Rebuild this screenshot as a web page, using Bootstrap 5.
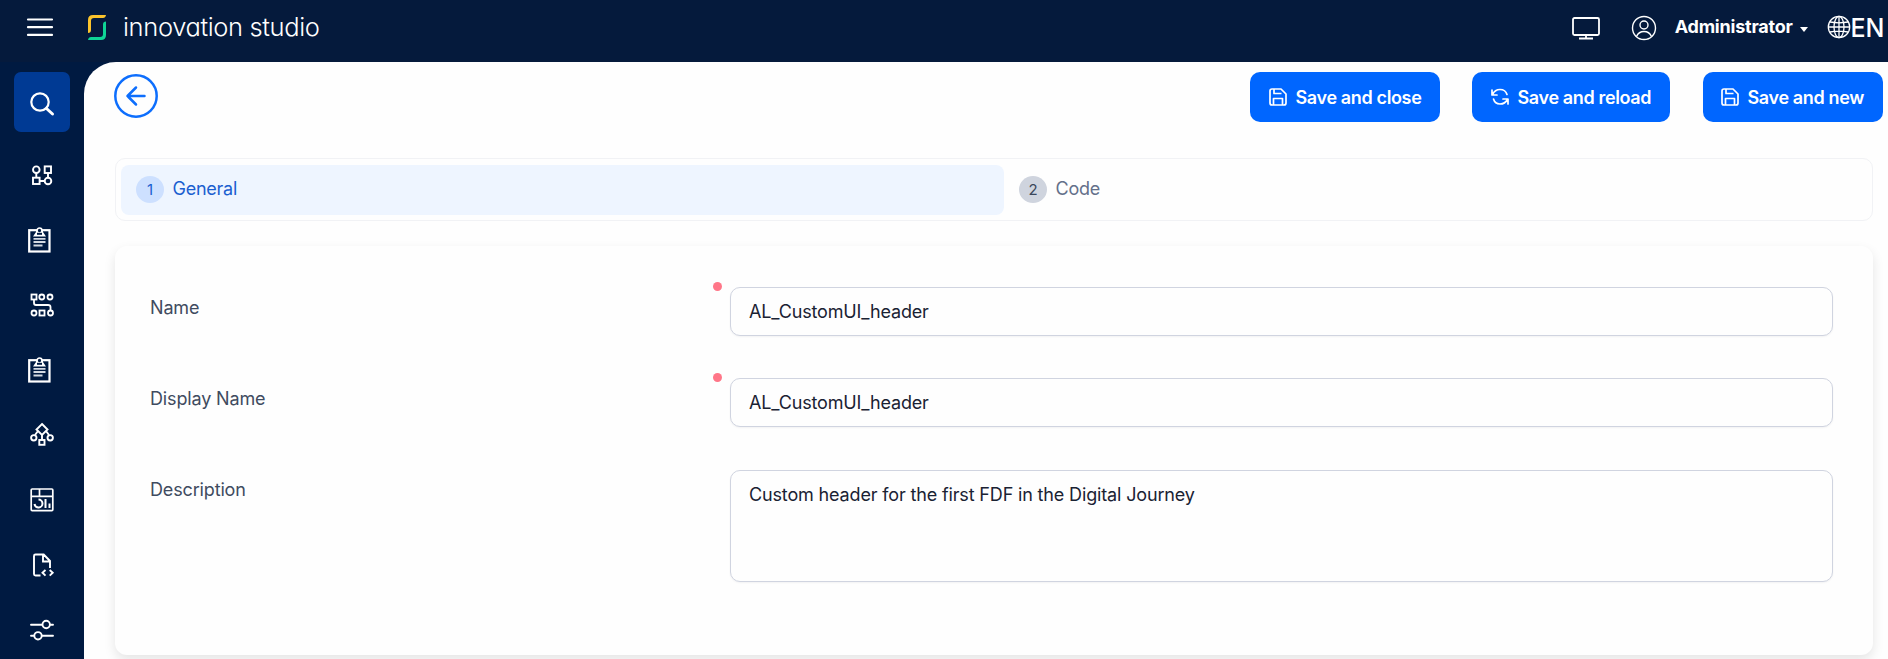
<!DOCTYPE html>
<html lang="en">
<head>
<meta charset="utf-8">
<title>innovation studio</title>
<link href="https://cdn.jsdelivr.net/npm/bootstrap@5.3.0/dist/css/bootstrap.min.css" rel="stylesheet">
<style>
body{font-family:Inter,"Liberation Sans",sans-serif;font-size:18px;line-height:24px;letter-spacing:-.15px;background:#001a41;color:#1a2233;height:659px;overflow:hidden}
svg{display:block;fill:none;stroke:currentColor;flex:none}
.top-bar{height:62px;background:#051a3c;color:#fff}
.top-bar .logo{stroke:none}
.menu-toggle{width:84px;height:62px;background:#001a41;color:#fff;padding:0 0 0 25px}
.menu-toggle svg{margin-top:-8px}
.brand-name{font-weight:300;font-size:25.5px;line-height:30px;font-feature-settings:"cv11";color:#fff;letter-spacing:-.36px;margin-left:17px}
.user-tools{padding-right:4px}
.screen-icon{margin:-6px 30px 0 0}
.user-icon{margin-top:-6px}
.globe-icon{margin:-8px 0 0 19px}
.user-name{font-weight:700;letter-spacing:-.22px;margin-left:17.5px;margin-top:-9px}
.user-name::after{margin-left:7px;border-width:5px 4.5px 0;border-style:solid;border-color:#fff transparent transparent;content:"";display:inline-block;vertical-align:1px}
.lang{font-size:25px;line-height:30px;font-weight:500;letter-spacing:-.3px;margin-top:-7px}
.side{width:84px;color:#fff}
.side-search{width:56px;height:60px;border-radius:7px;background:#003a94;margin:10px 0 10.5px 14px;padding:0}
.side-search svg{margin-top:3px}
.side-item{height:65px;width:84px;padding:0}
.workspace{background:#fefefe;border-top-left-radius:32px;height:597px;padding:10px 5px 0 30px;min-width:0}
.back{color:#0d6efd;padding:0;margin-top:2px}
.btn-save{height:50px;border-radius:10px;background:#06f;color:#fff;font-weight:600;font-size:18px;letter-spacing:-.36px;gap:8.500px;padding:0 0 0 19px}
.save-close{width:190px}
.save-reload{width:198px;margin:0 33px 0 32px}
.save-new{width:180px;padding-left:18px}
.stepper{margin:36px 10px 0 1px;height:63px;border:1px solid #f1f2f5;border-radius:10px;padding:6px 5px 5px}
.step{height:50px;border-radius:8px;padding-left:15px;gap:8.5px;color:#64708a;flex:0 0 883px}
.step.current{background:#eef5ff;color:#1b5fd0}
.step-text{margin-top:-2px;letter-spacing:-.25px}
.step-no{width:28px;height:27px;border-radius:50%;background:#cfd4de;color:#3b475b;font-size:15px;margin-top:-1px}
.current .step-no{background:#cde0ff;color:#1b5fd0}
.panel{margin:25px 10px 0 1px;height:409px;border-radius:12px;box-shadow:0 5px 12px rgba(0,0,0,.10);background:#fefefe;padding:41px 40px 0 35px}
.field-label{width:580px;color:#404b5f;padding-top:9px;flex:none}
.form-control{border:1px solid #d0d4e0;border-radius:10px;height:49px;font-size:18px;line-height:24px;letter-spacing:-.15px;padding:11px 18px;color:#1a2233;background:#fefefe;box-shadow:0 1px 2px rgba(16,24,40,.05)}
textarea.form-control{height:112px;resize:none;padding-top:12px}
.req{position:absolute;left:-17px;top:-5px;width:9px;height:9px;border-radius:50%;background:#ff7688}
</style>
</head>
<body>
<header class="top-bar d-flex">
  <button class="menu-toggle btn border-0 rounded-0 d-flex align-items-center" aria-label="Menu">
    <svg width="30" height="30" viewBox="0 0 30 30" stroke-width="2.2" stroke-linecap="round"><path d="M3 7.500h24M3 15.200h24M3 22.900h24"/></svg>
  </button>
  <a class="d-flex align-items-center text-decoration-none mb-0 ps-1 pb-2" href="#">
    <svg class="logo" width="18" height="25" viewBox="0 0 18 25"><path fill="#fcc42c" d="M0 18V5Q0 0 5 0h13q-.5 3-3 3H6Q3 3 3 6v9q0 3-3 3z"/><path fill="#0fd596" d="M18 6.500v13.500q0 5-5 5H0q.5-3 3-3h9q3 0 3-3V9.500q0-3 3-3z"/></svg>
    <span class="brand-name">innovation studio</span>
  </a>
  <div class="user-tools ms-auto d-flex align-items-center">
    <svg class="screen-icon" width="30" height="26" viewBox="0 0 30 26" stroke-width="1.8"><rect x="2" y="3" width="26" height="17" rx="1.500"/><path d="M15 20v3M8 23.500h14"/></svg>
    <svg class="user-icon" width="26" height="26" viewBox="0 0 26 26" stroke-width="1.400"><circle cx="13" cy="13" r="11.500"/><circle cx="13" cy="10" r="4"/><path d="M5.500 21.500q2.200-5 7.500-5t7.500 5"/></svg>
    <span class="user-name">Administrator</span>
    <svg class="globe-icon" width="24" height="24" viewBox="0 0 24 24" stroke-width="1.300"><circle cx="12" cy="12" r="10.700"/><ellipse cx="12" cy="12" rx="5" ry="10.700"/><path d="M12 1.300v21.400M1.300 12h21.400M3 7q9 1.600 18 0M3 17q9-1.600 18 0"/></svg>
    <span class="lang">EN</span>
  </div>
</header>
<div class="d-flex">
  <nav class="side d-flex flex-column flex-shrink-0">
    <button class="side-search btn border-0 text-white d-flex align-items-center justify-content-center" aria-label="Search"><svg width="26" height="26" viewBox="0 0 26 26" stroke-width="2.200" stroke-linecap="round"><circle cx="11" cy="11" r="8.700"/><path d="M17.500 17.500l6 5.500" stroke-width="3"/></svg></button>
    <a class="side-item text-white d-flex align-items-center justify-content-center" href="#"><svg width="30" height="30" viewBox="0 0 30 30" stroke-width="1.900"><circle cx="9.300" cy="9.700" r="3.300"/><rect x="17.700" y="6.400" width="6.300" height="6.600"/><rect x="6" y="17.700" width="6.600" height="6.300"/><circle cx="21" cy="21" r="3.300"/><path d="M9.300 13v4.500M21 13v4.500M12.600 21h5"/></svg></a>
    <a class="side-item text-white d-flex align-items-center justify-content-center" href="#"><svg width="30" height="30" viewBox="0 0 30 30" stroke-width="2.200"><rect x="2.200" y="5.200" width="20.300" height="21.300"/><path d="M6 11.500h13L16 7V5h-2Q12.500 1.300 11 5H9v2z" fill="#fff" stroke="none"/><circle cx="12.500" cy="5.500" r="2.500" fill="#001a41" stroke-width="1.700"/><path stroke="#001a41" stroke-width="2" d="M10 8.800h5"/><path stroke="#d4d9e2" stroke-width="1.800" d="M6.500 13.800h12M6.500 17h12M6.500 20.500h9"/></svg></a>
    <a class="side-item text-white d-flex align-items-center justify-content-center" href="#"><svg width="30" height="30" viewBox="0 0 30 30" stroke-width="1.800"><rect x="4.500" y="4.500" width="5" height="5"/><circle cx="14.800" cy="7" r="2.500"/><circle cx="23" cy="7" r="2.500"/><path d="M7 9.500V13q0 2 2 2h12q2.500 0 2.500 2v3"/><circle cx="7" cy="23" r="2.500"/><rect x="12.500" y="20.500" width="5" height="5"/><circle cx="23.500" cy="23" r="2.500"/></svg></a>
    <a class="side-item text-white d-flex align-items-center justify-content-center" href="#"><svg width="30" height="30" viewBox="0 0 30 30" stroke-width="2.200"><rect x="2.200" y="5.200" width="20.300" height="21.300"/><path d="M6 11.500h13L16 7V5h-2Q12.500 1.300 11 5H9v2z" fill="#fff" stroke="none"/><circle cx="12.500" cy="5.500" r="2.500" fill="#001a41" stroke-width="1.700"/><path stroke="#001a41" stroke-width="2" d="M10 8.800h5"/><path stroke="#d4d9e2" stroke-width="1.800" d="M6.500 13.800h12M6.500 17h12M6.500 20.500h9"/></svg></a>
    <a class="side-item text-white d-flex align-items-center justify-content-center" href="#"><svg width="30" height="30" viewBox="0 0 30 30" stroke-width="1.900"><path d="M15 4l5.500 5.500L15 15 9.500 9.500zM11 11l-3 4M19 11l3 4M15 15v5"/><circle cx="6.800" cy="17.800" r="2.700"/><circle cx="23.200" cy="17.800" r="2.700"/><rect x="12.300" y="20" width="5.200" height="4.800"/></svg></a>
    <a class="side-item text-white d-flex align-items-center justify-content-center" href="#"><svg width="30" height="30" viewBox="0 0 30 30" stroke-width="1.700"><rect x="4.200" y="4" width="21.600" height="21.600" rx="1"/><path d="M4 11.300h22M12.500 4v7"/><path stroke-width="2" d="M11.500 14.500A4 4 0 1 1 7.500 19M18.500 14v9M22.500 18.500V23"/></svg></a>
    <a class="side-item text-white d-flex align-items-center justify-content-center" href="#"><svg width="30" height="30" viewBox="0 0 30 30" stroke-width="1.900"><path d="M13.500 25.500h-5q-1.500 0-1.500-1.500V6q0-1.500 1.500-1.500h8.200L23 11v7M16 4.500v7h7M18.500 20l-3 2.800 3 2.800M22.700 20l3 2.800-3 2.800"/></svg></a>
    <a class="side-item text-white d-flex align-items-center justify-content-center" href="#"><svg width="30" height="30" viewBox="0 0 30 30" stroke-width="1.900" stroke-linecap="round"><path d="M4 9.700h11M23.500 9.700h2.500M4 20.800h3M15 20.800h11"/><circle cx="19.200" cy="9.500" r="3.700"/><circle cx="11" cy="20.800" r="3.700"/></svg></a>
  </nav>
  <main class="workspace flex-grow-1">
    <div class="d-flex align-items-start">
      <button class="back btn border-0" aria-label="Back"><svg width="44" height="44" viewBox="0 0 44 44" stroke-width="2.500" stroke-linecap="round" stroke-linejoin="round"><circle cx="22" cy="22" r="20.700"/><path d="M30.500 22H13.500M22 13.500L13.500 22l8.500 8.500"/></svg></button>
      <div class="ms-auto d-flex">
        <button class="btn btn-save save-close border-0 d-flex align-items-center"><svg width="18" height="18" viewBox="0 0 18 18" stroke-width="1.700" stroke-linejoin="round"><path d="M3 1h9l5 5v9q0 2-2 2H3q-2 0-2-2V3q0-2 2-2zM5 1v4.500h7.500M4.500 17v-6.500h9V17"/></svg>Save and close</button>
        <button class="btn btn-save save-reload border-0 d-flex align-items-center"><svg width="18" height="18" viewBox="0 0 18 18" stroke-width="1.700" stroke-linecap="round" stroke-linejoin="round"><path d="M1 2v5h5M1.500 6.500Q4 1.500 9 1.500q5.500 0 7 5M17 16v-5h-5M16.500 11.500Q14 16 9 16q-5 0-6.500-5"/></svg>Save and reload</button>
        <button class="btn btn-save save-new border-0 d-flex align-items-center"><svg width="18" height="18" viewBox="0 0 18 18" stroke-width="1.700" stroke-linejoin="round"><path d="M3 1h9l5 5v9q0 2-2 2H3q-2 0-2-2V3q0-2 2-2zM5 1v4.500h7.500M4.500 17v-6.500h9V17"/></svg>Save and new</button>
      </div>
    </div>
    <div class="stepper d-flex">
      <div class="step current d-flex align-items-center"><span class="step-no d-flex align-items-center justify-content-center">1</span><span class="step-text">General</span></div>
      <div class="step d-flex align-items-center flex-shrink-1"><span class="step-no d-flex align-items-center justify-content-center">2</span><span class="step-text">Code</span></div>
    </div>
    <form class="panel">
      <div class="d-flex" style="margin-bottom:42px"><label class="field-label" for="f1">Name</label><div class="position-relative flex-grow-1"><span class="req"></span><input id="f1" class="form-control" value="AL_CustomUI_header"></div></div>
      <div class="d-flex" style="margin-bottom:43px"><label class="field-label" for="f2">Display Name</label><div class="position-relative flex-grow-1"><span class="req"></span><input id="f2" class="form-control" value="AL_CustomUI_header"></div></div>
      <div class="d-flex"><label class="field-label pt-2" for="f3">Description</label><div class="flex-grow-1"><textarea id="f3" class="form-control">Custom header for the first FDF in the Digital Journey</textarea></div></div>
    </form>
  </main>
</div>
<script src="https://cdn.jsdelivr.net/npm/bootstrap@5.3.0/dist/js/bootstrap.bundle.min.js"></script>
</body>
</html>
